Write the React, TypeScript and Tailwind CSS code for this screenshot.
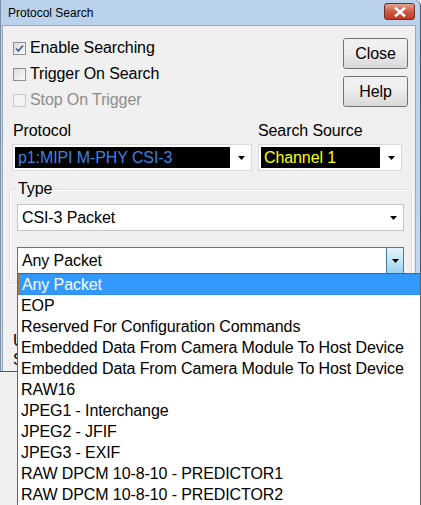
import React from "react";

const items = [
  "Any Packet",
  "EOP",
  "Reserved For Configuration Commands",
  "Embedded Data From Camera Module To Host Device",
  "Embedded Data From Camera Module To Host Device",
  "RAW16",
  "JPEG1 - Interchange",
  "JPEG2 - JFIF",
  "JPEG3 - EXIF",
  "RAW DPCM 10-8-10 - PREDICTOR1",
  "RAW DPCM 10-8-10 - PREDICTOR2",
];

function Arrow() {
  return (
    <svg width="7" height="4" viewBox="0 0 7 4" className="block">
      <path d="M0 0h7L3.5 4z" fill="#000" />
    </svg>
  );
}

function CheckBox({ label, checked, disabled }: { label: string; checked?: boolean; disabled?: boolean }) {
  return (
    <div className="flex h-[20px] items-center gap-[4px]">
      <div
        className={`flex h-[13px] w-[13px] items-center justify-center border bg-gradient-to-br ${
          disabled ? "border-[#c8c8c8] from-[#f4f4f4] to-[#f4f4f4]" : "border-[#8e8f8f] from-[#dcdcdc] to-[#fbfbfb]"
        }`}
      >
        {checked && (
          <svg width="9" height="9" viewBox="0 0 9 9">
            <path d="M1 4.5l2.3 2.5L8 1.5" fill="none" stroke="#4a5f97" strokeWidth="1.8" />
          </svg>
        )}
      </div>
      <span className={disabled ? "text-[#8d8d8d]" : "text-black"}>{label}</span>
    </div>
  );
}

function Button({ label }: { label: string }) {
  return (
    <div className="flex h-[31px] w-[65px] flex-col overflow-hidden rounded-[3px] border border-[#707070] bg-[#dddddd] shadow-[inset_0_0_0_1px_#fcfcfc]">
      <div className="relative flex h-full items-center justify-center bg-gradient-to-b from-[#f2f2f2] via-[#ebebeb] via-50% to-[#d8d8d8]">
        {label}
      </div>
    </div>
  );
}

export default function App() {
  return (
    <div className="relative h-[505px] w-[421px] overflow-hidden bg-[#f0f0f0] text-[16px] leading-[20px] tracking-[-0.1px] text-black [font-family:'Liberation_Sans',Arial,sans-serif]">
      {/* Window */}
      <div className="flex h-[372px] w-[421px] flex-col rounded-tr-[6px] border-b border-r border-[#44576e] bg-gradient-to-b from-[#b9d1ea] to-[#c6daef] pl-[2px] pr-[4px] shadow-[inset_1px_0_0_#7d8fa3]">
        {/* Title bar */}
        <div className="flex h-[25px] shrink-0 items-center justify-between pl-[6px] pr-[1px]">
          <span className="text-[12px] tracking-normal text-black">Protocol Search</span>
          <div className="mb-[2px] flex h-[17px] w-[31px] items-center justify-center rounded-[3px] border border-[#6f2e28] bg-gradient-to-b from-[#e5a493] via-[#cf5a42] via-50% to-[#c13a24]">
            <svg width="12" height="10" viewBox="0 0 12 10">
              <path d="M2 1.5l8 7M10 1.5l-8 7" stroke="#fff" strokeWidth="2.6" strokeLinecap="square" />
            </svg>
          </div>
        </div>

        {/* Client area */}
        <div className="flex flex-1 flex-col border border-b-0 border-[#99aac0] bg-[#f0f0f0] pl-[9px] pr-[7px]">
          <div className="flex h-[86px] justify-between">
            <div className="ml-[1px] mt-[12px] flex flex-col gap-[6px]">
              <CheckBox label="Enable Searching" checked />
              <CheckBox label="Trigger On Search" />
              <CheckBox label="Stop On Trigger" disabled />
            </div>
            <div className="mt-[12px] flex flex-col gap-[7px]">
              <Button label="Close" />
              <Button label="Help" />
            </div>
          </div>

          <div className="mt-[9px] flex gap-[6px]">
            <div className="flex w-[240px] flex-col gap-[3px]">
              <span className="h-[20px] pl-[1px]">Protocol</span>
              <div className="flex h-[27px] items-center border border-[#d9d9d9] bg-white pl-[2px] pr-[6px]">
                <div className="flex h-[21px] flex-1 items-center bg-black pl-[3px] text-[#3a83e0]">p1:MIPI M-PHY CSI-3</div>
                <div className="ml-[8px]">
                  <Arrow />
                </div>
              </div>
            </div>
            <div className="flex w-[144px] flex-col gap-[3px]">
              <span className="h-[20px]">Search Source</span>
              <div className="flex h-[27px] items-center border border-[#d9d9d9] bg-white pl-[2px] pr-[6px]">
                <div className="flex h-[21px] flex-1 items-center bg-black pl-[3px] text-[#ffff00]">Channel 1</div>
                <div className="ml-[8px]">
                  <Arrow />
                </div>
              </div>
            </div>
          </div>

          {/* Type group */}
          <div className="relative ml-[-3px] mt-[18px] w-[403px] rounded-[3px] border border-[#d5dfe5] px-[7px] pb-[9px] pt-[14px] shadow-[inset_1px_1px_0_#ffffff,1px_1px_0_#ffffff]">
            <span className="absolute left-[6px] top-[-11px] bg-[#f0f0f0] px-[2px]">Type</span>
            <div className="flex h-[27px] items-center justify-between border border-[#c5c5c5] bg-white pl-[4px] pr-[6px]">
              <span>CSI-3 Packet</span>
              <Arrow />
            </div>
            <div className="mt-[16px] flex h-[27px] items-center justify-between border border-[#3c7fb1] bg-white pl-[4px]">
              <span>Any Packet</span>
              <div className="flex h-full w-[17px] items-center justify-center border-l border-[#3c7fb1] bg-gradient-to-b from-[#e5f4fc] via-[#c4e5f6] via-50% to-[#98d1ef]">
                <Arrow />
              </div>
            </div>
          </div>

          {/* labels hidden behind the open list */}
          <div className="mt-[47px] flex flex-col pl-[1px]">
            <span className="h-[19px] w-[5px] overflow-hidden">U</span>
            <span className="h-[19px] w-[5px] overflow-hidden">S</span>
          </div>
        </div>
      </div>

      {/* Drop-down list */}
      <div className="absolute left-[17px] top-[273px] w-[404px] border border-[#646464] bg-white pb-[2px]">
        {items.map((t, i) => (
          <div
            key={i}
            className={`flex h-[21px] items-center whitespace-nowrap pl-[3px] ${
              i === 0 ? "border border-dotted border-[#a86c2c] bg-[#3399ff] pl-[2px] text-white" : "text-black"
            }`}
          >
            {t}
          </div>
        ))}
      </div>
    </div>
  );
}
